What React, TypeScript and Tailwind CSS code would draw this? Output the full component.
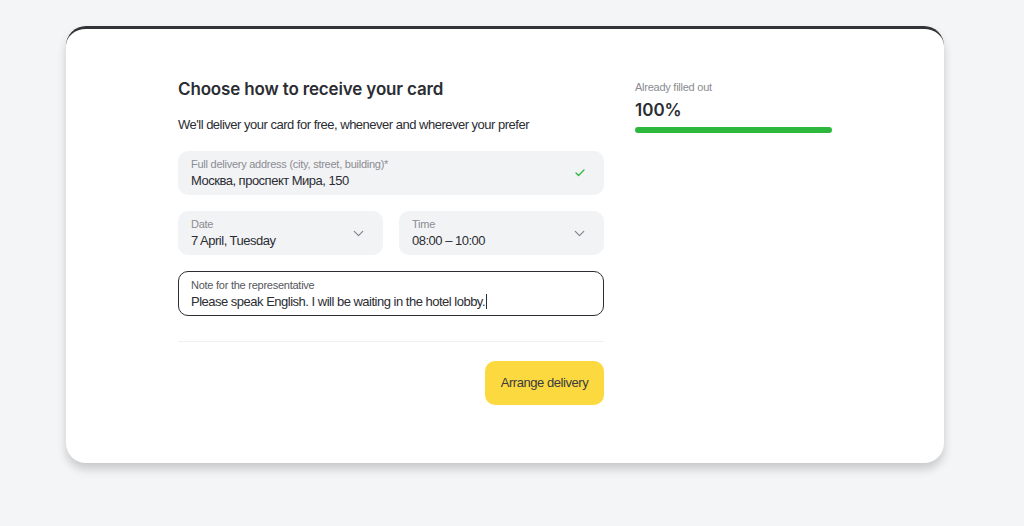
import React from 'react';
import { ChevronDown, Check } from 'lucide-react';

const Field: React.FC<{ label: string; value: string; right?: React.ReactNode; className?: string }> = ({ label, value, right, className }) => (
  <div className={`flex items-center h-[44px] rounded-[10px] bg-[#f2f3f5] pl-[13px] pr-[16px] ${className ?? ''}`}>
    <div className="flex-1 flex flex-col pt-[1px]">
      <span className="text-[11px] leading-[14px] text-[#8a8c92] tracking-[-0.25px]">{label}</span>
      <span className="text-[13px] leading-[18px] text-[#2b2d33] mt-[1px] tracking-[-0.5px]">{value}</span>
    </div>
    {right}
  </div>
);

export default function App() {
  return (
    <div className="min-h-[526px] w-[1024px] bg-[#f4f5f7] pt-[26px]" style={{ fontFamily: '"Liberation Sans", Arial, sans-serif' }}>
      <div className="ml-[66px] w-[878px] h-[437px] bg-white rounded-[20px] border-t-[3px] border-[#333438] shadow-[0_6px_10px_rgba(0,0,0,0.18)] flex pl-[112px] pt-[48px]">
        <div className="w-[426px] flex flex-col">
          <h1 className="text-[17px] leading-[24px] font-semibold text-[#2b2d33] tracking-[-0.15px] font-[Inter,sans-serif]">Choose how to receive your card</h1>
          <p className="text-[13px] leading-[18px] text-[#2b2d33] mt-[15px] tracking-[-0.5px]">We'll deliver your card for free, whenever and wherever your prefer</p>
          <Field
            className="mt-[17px]"
            label="Full delivery address (city, street, building)*"
            value="Москва, проспект Мира, 150"
            right={<Check size={12} strokeWidth={2.5} className="text-[#2db83d] mr-[2px]" />}
          />
          <div className="flex gap-[16px] mt-[16px]">
            <Field
              className="flex-1"
              label="Date"
              value="7 April, Tuesday"
              right={<ChevronDown size={17} strokeWidth={1.6} className="text-[#7d8088]" />}
            />
            <Field
              className="flex-1"
              label="Time"
              value="08:00 – 10:00"
              right={<ChevronDown size={17} strokeWidth={1.6} className="text-[#7d8088]" />}
            />
          </div>
          <div className="flex items-center h-[45px] rounded-[10px] border border-[#2b2d33] pl-[12px] pr-[16px] mt-[16px]">
            <div className="flex flex-col pt-[1px]">
              <span className="text-[11px] leading-[14px] text-[#55575d] tracking-[-0.25px]">Note for the representative</span>
              <span className="text-[13px] leading-[18px] text-[#2b2d33] mt-[1px] flex items-center tracking-[-0.5px]">
                Please speak English. I will be waiting in the hotel lobby.
                <span className="inline-block w-px h-[15px] bg-[#2b2d33] ml-[1px]" />
              </span>
            </div>
          </div>
          <div className="h-px bg-[#eef0f2] mt-[25px]" />
          <div className="flex justify-end mt-[19px]">
            <button className="h-[44px] w-[119px] rounded-[10px] bg-[#fcd93f] text-[13px] text-[#3a3b40] tracking-[-0.45px]">Arrange delivery</button>
          </div>
        </div>
        <div className="ml-[31px] w-[197px] flex flex-col">
          <span className="text-[11px] leading-[14px] text-[#8a8c92] mt-[3px] tracking-[-0.25px]">Already filled out</span>
          <span className="text-[17px] leading-[22px] font-semibold text-[#2b2d33] mt-[5px] font-[Inter,sans-serif]">100%</span>
          <div className="h-[6px] rounded-full bg-[#2db83d] mt-[6px]" />
        </div>
      </div>
    </div>
  );
}
